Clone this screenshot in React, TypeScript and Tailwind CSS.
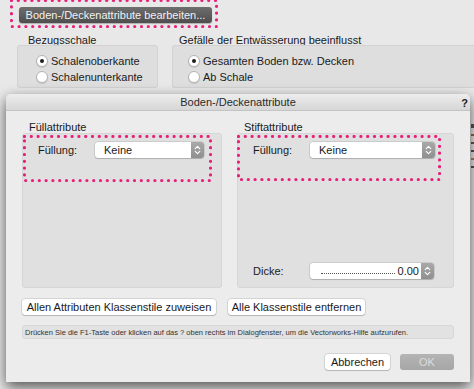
import React from "react";

function DotBox({ w, h, className }: { w: number; h: number; className: string }) {
  return (
    <svg width={w} height={h} className={`pointer-events-none absolute ${className}`}>
      <rect
        x={1.5}
        y={1.5}
        width={w - 3}
        height={h - 3}
        fill="none"
        stroke="#e8207a"
        strokeWidth={3.2}
        strokeDasharray="0 6.8"
        strokeLinecap="round"
      />
    </svg>
  );
}

function Radio({ checked, label }: { checked?: boolean; label: string }) {
  return (
    <div className="flex h-[16px] items-center gap-[3px]">
      <div className="flex h-[12px] w-[12px] items-center justify-center rounded-full border border-[#b4b4b4] bg-white shadow-[0_1px_1px_rgba(0,0,0,0.12)]">
        {checked && <div className="h-[4px] w-[4px] rounded-full bg-[#1e1e1e]" />}
      </div>
      <span className="text-[11px] leading-[12px] text-[#1a1a1a]">{label}</span>
    </div>
  );
}

function Stepper() {
  return (
    <div className="flex h-full w-[13px] items-center justify-center rounded-r-[3px] bg-gradient-to-b from-[#a9a9a9] to-[#8f8f8f]">
      <svg width="7" height="10" viewBox="0 0 7 10" fill="none" stroke="white" strokeWidth="1.1" strokeLinecap="round" strokeLinejoin="round">
        <path d="M1.2 3.6 L3.5 1.4 L5.8 3.6" />
        <path d="M1.2 6.4 L3.5 8.6 L5.8 6.4" />
      </svg>
    </div>
  );
}

function Popup({ width, text }: { width: string; text: string }) {
  return (
    <div className={`flex h-[16px] ${width} items-center rounded-[3px] bg-white shadow-[0_0_0_0.5px_rgba(0,0,0,0.18),0_1px_1px_rgba(0,0,0,0.15)]`}>
      <span className="flex-1 pl-[9px] text-[11px] leading-[12px] text-[#1a1a1a]">{text}</span>
      <Stepper />
    </div>
  );
}

function MacButton({ children, className }: { children: React.ReactNode; className: string }) {
  return (
    <div className={`flex h-[16px] items-center justify-center rounded-[3px] bg-white text-[11px] leading-[12px] text-[#1a1a1a] shadow-[0_0_0_0.5px_rgba(0,0,0,0.2),0_1px_1px_rgba(0,0,0,0.15)] ${className}`}>
      {children}
    </div>
  );
}

export default function App() {
  return (
    <div className="relative h-[389px] w-[474px] overflow-hidden bg-[#e8e8e8] font-['Liberation_Sans',Arial,sans-serif]">
      {/* background window */}
      <div className="flex flex-col">
        <div className="relative ml-[10px] mt-[-1px] h-[29px] w-[208px] pl-[9px] pr-[6px] pt-[8px]">
          <div className="flex h-[16px] items-center justify-center rounded-[3px] bg-gradient-to-b from-[#6e6e6e] to-[#4e4e4e] text-[11px] leading-[12px] text-[#f2f2f2] shadow-[0_1px_1px_rgba(0,0,0,0.25)]">
            Boden-/Deckenattribute bearbeiten...
          </div>
          <DotBox w={208} h={29} className="left-0 top-0" />
        </div>
        <div className="mt-[6px] flex">
          <div className="ml-[17px] flex w-[141px] flex-col">
            <div className="h-[11px] pl-[11px] text-[11px] leading-[12px] text-[#1a1a1a]">Bezugsschale</div>
            <div className="h-[43px] rounded-[3px] border border-[#d2d2d2] bg-[#dedede] pl-[18px] pt-[7px]">
              <Radio checked label="Schalenoberkante" />
              <Radio label="Schalenunterkante" />
            </div>
          </div>
          <div className="ml-[14px] flex flex-1 flex-col">
            <div className="h-[11px] pl-[7px] text-[11px] leading-[12px] text-[#1a1a1a]">Gefälle der Entwässerung beeinflusst</div>
            <div className="h-[43px] rounded-l-[3px] border border-r-0 border-[#d2d2d2] bg-[#dedede] pl-[15px] pt-[7px]">
              <Radio checked label="Gesamten Boden bzw. Decken" />
              <Radio label="Ab Schale" />
            </div>
          </div>
        </div>
      </div>

      {/* bits of background content at right edge */}
      <div className="absolute left-[471px] top-[124px] flex w-[3px] flex-col gap-[6px]">
        <div className="h-[4px] bg-[#555]" />
        <div className="h-[2px] bg-[#8a6a50]" />
        <div className="h-[2px] bg-[#6b5545]" />
        <div className="h-[2px] bg-[#555]" />
        <div className="h-[2px] bg-[#a88260]" />
        <div className="h-[2px] bg-[#555]" />
      </div>

      {/* dialog window */}
      <div className="absolute left-[6px] top-[94px] flex h-[288px] w-[464px] flex-col rounded-t-[5px] bg-[#ececec] shadow-[0_5px_14px_rgba(0,0,0,0.65)]">
        <div className="relative flex h-[17px] items-center justify-center rounded-t-[5px] border-b border-[#c4c4c4] bg-gradient-to-b from-[#ededed] to-[#d6d6d6]">
          <span className="text-[11px] leading-[12px] text-[#2a2a2a]">Boden-/Deckenattribute</span>
          <span className="absolute right-[2px] top-[3px] text-[11px] font-bold leading-[12px] text-[#222]">?</span>
        </div>

        <div className="relative flex gap-[15px] px-[16px] pt-[10px]">
          {/* left group */}
          <div className="flex w-[200px] flex-col">
            <div className="h-[12px] pl-[7px] text-[11px] leading-[12px] text-[#1a1a1a]">Füllattribute</div>
            <div className="h-[155px] rounded-[3px] border border-[#d6d6d6] bg-[#e0e0e0] pl-[15px] pt-[8px]">
              <div className="flex items-center">
                <span className="w-[57px] text-[11px] leading-[12px] text-[#1a1a1a]">Füllung:</span>
                <Popup width="w-[109px]" text="Keine" />
              </div>
            </div>
          </div>
          {/* right group */}
          <div className="flex w-[217px] flex-col">
            <div className="h-[12px] pl-[7px] text-[11px] leading-[12px] text-[#1a1a1a]">Stiftattribute</div>
            <div className="flex h-[155px] flex-col rounded-[3px] border border-[#d6d6d6] bg-[#e0e0e0] pb-[8px] pl-[15px] pt-[8px]">
              <div className="flex items-center">
                <span className="w-[57px] text-[11px] leading-[12px] text-[#1a1a1a]">Füllung:</span>
                <Popup width="w-[125px]" text="Keine" />
              </div>
              <div className="mt-auto flex items-center">
                <span className="w-[57px] text-[11px] leading-[12px] text-[#1a1a1a]">Dicke:</span>
                <div className="flex h-[16px] w-[124px] items-center rounded-[3px] bg-white shadow-[0_0_0_0.5px_rgba(0,0,0,0.18),0_1px_1px_rgba(0,0,0,0.15)]">
                  <div className="ml-[11px] mr-[3px] mt-[4px] flex-1 border-b border-dotted border-[#555]" />
                  <span className="pr-[2px] text-[11px] leading-[12px] text-[#1a1a1a]">0.00</span>
                  <Stepper />
                </div>
              </div>
            </div>
          </div>

          {/* pink annotation outlines */}
          <DotBox w={189} h={47} className="left-[17px] top-[24px]" />
          <DotBox w={204} h={46} className="left-[231px] top-[24px]" />
        </div>

        <div className="mt-[11px] flex gap-[12px] px-[16px]">
          <MacButton className="w-[194px]">Allen Attributen Klassenstile zuweisen</MacButton>
          <MacButton className="w-[137px]">Alle Klassenstile entfernen</MacButton>
        </div>

        <div className="mx-[16px] mt-[10px] flex h-[14px] items-center rounded-[3px] border border-[#d8d8d8] bg-[#e2e2e2] pl-[2px]">
          <span className="whitespace-nowrap text-[7.5px] leading-[9px] text-[#333]">
            Drücken Sie die F1-Taste oder klicken auf das ? oben rechts im Dialogfenster, um die Vectorworks-Hilfe aufzurufen.
          </span>
        </div>

        <div className="mt-[15px] flex justify-end gap-[10px] px-[16px]">
          <MacButton className="w-[65px]">Abbrechen</MacButton>
          <div className="flex h-[16px] w-[54px] items-center justify-center rounded-[3px] bg-gradient-to-b from-[#b4b4b4] to-[#a6a6a6] text-[11px] leading-[12px] text-[#dcdcdc]">
            OK
          </div>
        </div>
      </div>
    </div>
  );
}
